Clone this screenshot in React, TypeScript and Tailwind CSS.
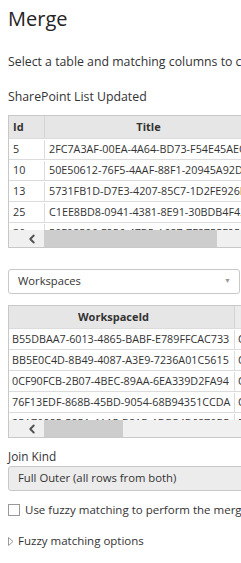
import { ChevronLeft } from "lucide-react";

const font = { fontFamily: '"Open Sans", "Noto Sans", sans-serif' };

const sharePointRows = [
  ["5", "2FC7A3AF-00EA-4A64-BD73-F54E45AEC1A7"],
  ["10", "50E50612-76F5-4AAF-88F1-20945A92D0E3"],
  ["13", "5731FB1D-D7E3-4207-85C7-1D2FE926E6B2"],
  ["25", "C1EE8BD8-0941-4381-8E91-30BDB4F42C17"],
  ["30", "50F08506-F956-47B5-A687-7F8755F959C3"],
];

const workspaceRows = [
  ["B55DBAA7-6013-4865-BABF-E789FFCAC733", "C"],
  ["BB5E0C4D-8B49-4087-A3E9-7236A01C5615", "C"],
  ["0CF90FCB-2B07-4BEC-89AA-6EA339D2FA94", "C"],
  ["76F13EDF-868B-45BD-9054-68B94351CCDA", "C"],
  ["25A70985-5951-4A15-B81B-1DB54B6870B5", "E"],
];

const ScrollBar = ({ thumbWidth }: { thumbWidth: string }) => (
  <div className="flex h-[17px] shrink-0 items-center bg-[#f0f0f0]">
    <div className="flex h-full w-[35px] items-center justify-end pr-[5px]">
      <ChevronLeft size={14} strokeWidth={3.2} className="text-[#505050]" />
    </div>
    <div className={`h-full bg-[#cdcdcd] ${thumbWidth}`} />
  </div>
);

const SharePointTable = () => (
  <div className="flex h-[133px] w-[300px] flex-col border border-[#c8c8c8]">
    <div className="min-h-0 flex-1 overflow-hidden">
      <div className="flex h-[22px] items-center bg-[#e6e6e6] text-[11px] font-bold text-[#333]">
        <div className="w-[35px] shrink-0 pl-[4px]">Id</div>
        <div className="w-[208px] shrink-0 border-l border-[#d4d4d4] text-center leading-[22px]">
          Title
        </div>
      </div>
      {sharePointRows.map(([id, title]) => (
        <div
          key={id}
          className="flex h-[21px] items-center border-t border-[#dcdcdc] text-[10.75px] text-[#333]"
        >
          <div className="w-[35px] shrink-0 pl-[4px] leading-[19px]">{id}</div>
          <div className="w-[250px] shrink-0 overflow-hidden whitespace-nowrap border-l border-[#dcdcdc] pl-[4px] leading-[19px]">
            {title}
          </div>
        </div>
      ))}
    </div>
    <ScrollBar thumbWidth="w-[173px]" />
  </div>
);

const WorkspaceTable = () => (
  <div className="flex h-[133px] w-[300px] flex-col border border-[#c8c8c8]">
    <div className="min-h-0 flex-1 overflow-hidden">
      <div className="flex h-[22px] items-center bg-[#e6e6e6] text-[11px] font-bold text-[#333]">
        <div className="w-[225px] shrink-0 pr-[16px] text-center">WorkspaceId</div>
        <div className="h-full flex-1 border-l border-[#d4d4d4] bg-[#ebebeb]" />
      </div>
      {workspaceRows.map(([id, c]) => (
        <div
          key={id}
          className="flex h-[21px] items-center border-t border-[#dcdcdc] text-[10.75px] text-[#333]"
        >
          <div className="w-[225px] shrink-0 overflow-hidden whitespace-nowrap pl-[3px] leading-[19px]">
            {id}
          </div>
          <div className="flex-1 border-l border-[#dcdcdc] pl-[3px] leading-[19px]">{c}</div>
        </div>
      ))}
    </div>
    <ScrollBar thumbWidth="w-[79px]" />
  </div>
);

export default function App() {
  return (
    <div
      className="h-[563px] w-[241px] overflow-hidden bg-white pl-[8px] text-[#333]"
      style={font}
    >
      <div className="w-[400px]">
        <h1 className="pt-[5px] text-[20px] leading-[28px] text-[#252423]">Merge</h1>

        <p className="mt-[20px] whitespace-nowrap text-[12.3px] leading-[18px]">
          Select a table and matching columns to create a merged table.
        </p>

        <p className="mt-[17px] text-[12.3px] leading-[18px]">SharePoint List Updated</p>

        <div className="mt-[9px]">
          <SharePointTable />
        </div>

        <div className="mt-[21px] flex h-[25px] w-[232px] items-center justify-between rounded-[3px] border border-[#c8c8c8] bg-white pl-[9px] pr-[8px]">
          <span className="text-[11.2px]">Workspaces</span>
          <span className="text-[7px] text-[#999]">▼</span>
        </div>

        <div className="mt-[11px]">
          <WorkspaceTable />
        </div>

        <p className="mt-[9px] text-[11.8px] leading-[18px]">Join Kind</p>

        <div className="mt-[1px] flex h-[25px] w-[300px] items-center rounded-[3px] border border-[#c8c8c8] bg-[#ececec] pl-[9px]">
          <span className="text-[11.3px]">Full Outer (all rows from both)</span>
        </div>

        <div className="mt-[10px] flex items-center gap-[5px]">
          <div className="h-[12px] w-[12px] border border-[#999] bg-white" />
          <span className="whitespace-nowrap text-[11.5px] leading-[18px]">
            Use fuzzy matching to perform the merg
          </span>
          <div className="-ml-[4px] h-[8px] w-[8px] bg-[#cfe3f5]" />
        </div>

        <div className="mt-[13px] flex items-center gap-[4px]">
          <svg width="6" height="9" viewBox="0 0 6 9">
            <path d="M0.5 0.5 L5 4.5 L0.5 8.5 Z" fill="none" stroke="#9a9a9a" strokeWidth="1" />
          </svg>
          <span className="text-[11.5px] leading-[18px]">Fuzzy matching options</span>
        </div>
      </div>
    </div>
  );
}
